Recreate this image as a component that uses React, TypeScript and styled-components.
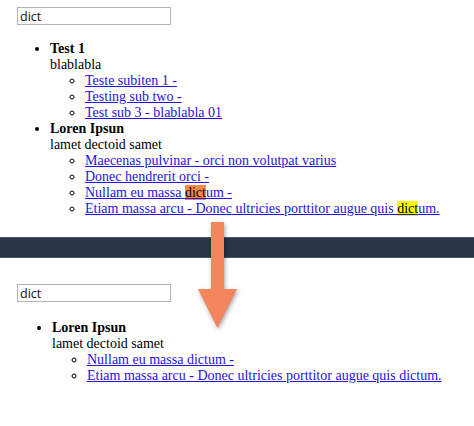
import React from "react";
import styled, { createGlobalStyle } from "styled-components";

const Global = createGlobalStyle`
  html, body { margin: 0; padding: 0; background: #fff; }
  body { font-family: "Liberation Serif", "Times New Roman", serif; font-size: 14px; color: #000; }
`;

const Page = styled.div`
  position: relative;
  width: 474px;
  height: 426px;
  overflow: hidden;
  background: #fff;
`;

const Section = styled.div<{ $top: number }>`
  padding: ${(p) => p.$top}px 0 0 17px;
`;

const SearchInput = styled.input`
  display: block;
  box-sizing: border-box;
  width: 154px;
  height: 18px;
  margin: 0;
  padding: 0 2px;
  border: 1px solid #b4b4b4;
  font-family: "Open Sans", "Liberation Sans", sans-serif;
  font-size: 12.5px;
  color: #111;
  background: #fff;
  outline: none;
`;

const OuterList = styled.ul<{ $gap: number; $indent: number }>`
  margin: ${(p) => p.$gap}px 0 0 0;
  padding-left: ${(p) => p.$indent}px;
  list-style: disc;
  line-height: 16px;
`;

const Item = styled.li``;

const Title = styled.b`
  display: block;
  font-weight: bold;
`;

const Desc = styled.div``;

const InnerList = styled.ul`
  margin: 0;
  padding-left: 35px;
  list-style: circle;
`;

const Link = styled.a`
  color: #1f12e4;
  text-decoration: underline;
  text-underline-offset: 1px;
`;

const Mark = styled.span<{ $tone: "orange" | "yellow" }>`
  background: ${(p) => (p.$tone === "orange" ? "#ef8a4d" : "#f7f500")};
  color: #000;
  text-decoration: underline;
  text-decoration-color: #1f12e4;
`;

const Divider = styled.div`
  height: 21px;
  margin-top: 20px;
  background: #2b3547;
  border-top: 1px solid #4a5466;
  border-bottom: 1px solid #4a5466;
  box-sizing: border-box;
`;

const Arrow = styled.svg`
  position: absolute;
  left: 196px;
  top: 219px;
  width: 46px;
  height: 116px;
  filter: drop-shadow(1px 2px 2px rgba(0, 0, 0, 0.35));
`;

export default function App() {
  return (
    <Page>
      <Global />
      <Section $top={7}>
        <SearchInput defaultValue="dict" />
        <OuterList $gap={16} $indent={33}>
          <Item>
            <Title>Test 1</Title>
            <Desc>blablabla</Desc>
            <InnerList>
              <li><Link href="#">Teste subiten 1 -</Link></li>
              <li><Link href="#">Testing sub two -</Link></li>
              <li><Link href="#">Test sub 3 - blablabla 01</Link></li>
            </InnerList>
          </Item>
          <Item>
            <Title>Loren Ipsun</Title>
            <Desc>lamet dectoid samet</Desc>
            <InnerList>
              <li><Link href="#">Maecenas pulvinar - orci non volutpat varius</Link></li>
              <li><Link href="#">Donec hendrerit orci -</Link></li>
              <li>
                <Link href="#">
                  Nullam eu massa <Mark $tone="orange">dict</Mark>um -
                </Link>
              </li>
              <li>
                <Link href="#">
                  Etiam massa arcu - Donec ultricies porttitor augue quis <Mark $tone="yellow">dict</Mark>um.
                </Link>
              </li>
            </InnerList>
          </Item>
        </OuterList>
      </Section>
      <Divider />
      <Section $top={26}>
        <SearchInput defaultValue="dict" />
        <OuterList $gap={18} $indent={35}>
          <Item>
            <Title>Loren Ipsun</Title>
            <Desc>lamet dectoid samet</Desc>
            <InnerList>
              <li><Link href="#">Nullam eu massa dictum -</Link></li>
              <li><Link href="#">Etiam massa arcu - Donec ultricies porttitor augue quis dictum.</Link></li>
            </InnerList>
          </Item>
        </OuterList>
      </Section>
      <Arrow viewBox="0 0 46 116">
        <polygon points="15,3 28,3 28,70 41,70 21.5,109 2,70 15,70" fill="#f4865e" />
      </Arrow>
    </Page>
  );
}
